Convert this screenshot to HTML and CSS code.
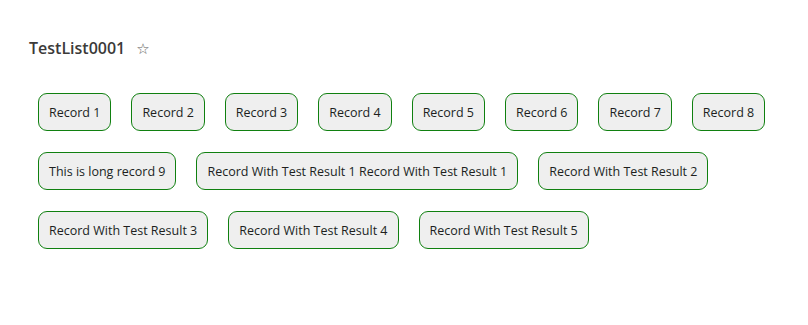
FILE: index.html
```html
<!DOCTYPE html>
<html>
<head>
<meta charset="utf-8">
<link rel="stylesheet" href="styles.css">
</head>
<body>
<div class="page">
  <div class="header">
    <h1 class="title">TestList0001</h1>
    <span class="star">☆</span>
  </div>
  <div class="records">
    <button class="record">Record 1</button>
    <button class="record">Record 2</button>
    <button class="record">Record 3</button>
    <button class="record">Record 4</button>
    <button class="record">Record 5</button>
    <button class="record">Record 6</button>
    <button class="record">Record 7</button>
    <button class="record">Record 8</button>
    <button class="record">This is long record 9</button>
    <button class="record">Record With Test Result 1 Record With Test Result 1</button>
    <button class="record">Record With Test Result 2</button>
    <button class="record">Record With Test Result 3</button>
    <button class="record">Record With Test Result 4</button>
    <button class="record">Record With Test Result 5</button>
  </div>
</div>
</body>
</html>
```
FILE: styles.css
```css
html, body {
  margin: 0;
  padding: 0;
  background: #ffffff;
}
.page {
  font-family: "Open Sans", "Noto Sans", sans-serif;
  padding: 36px 0 0 29px;
}
.header {
  display: flex;
  align-items: center;
  gap: 11px;
  height: 24px;
}
.title {
  margin: 0;
  font-size: 16px;
  font-weight: 600;
  color: #3b3a39;
  line-height: 24px;
}
.star {
  font-family: "DejaVu Sans", sans-serif;
  font-size: 15px;
  color: #605e5c;
  line-height: 24px;
  padding-top: 1px;
}
.records {
  display: flex;
  flex-wrap: wrap;
  gap: 21px 20px;
  margin: 33px 0 0 9px;
  width: 770px;
}
.record {
  font-family: "Open Sans", "Noto Sans", sans-serif;
  font-size: 12.5px;
  color: #201f1e;
  background: #efefef;
  border: 1px solid #108010;
  border-radius: 9px;
  height: 38px;
  padding: 2px 10px 0;
  line-height: 18px;
  cursor: pointer;
}
```
